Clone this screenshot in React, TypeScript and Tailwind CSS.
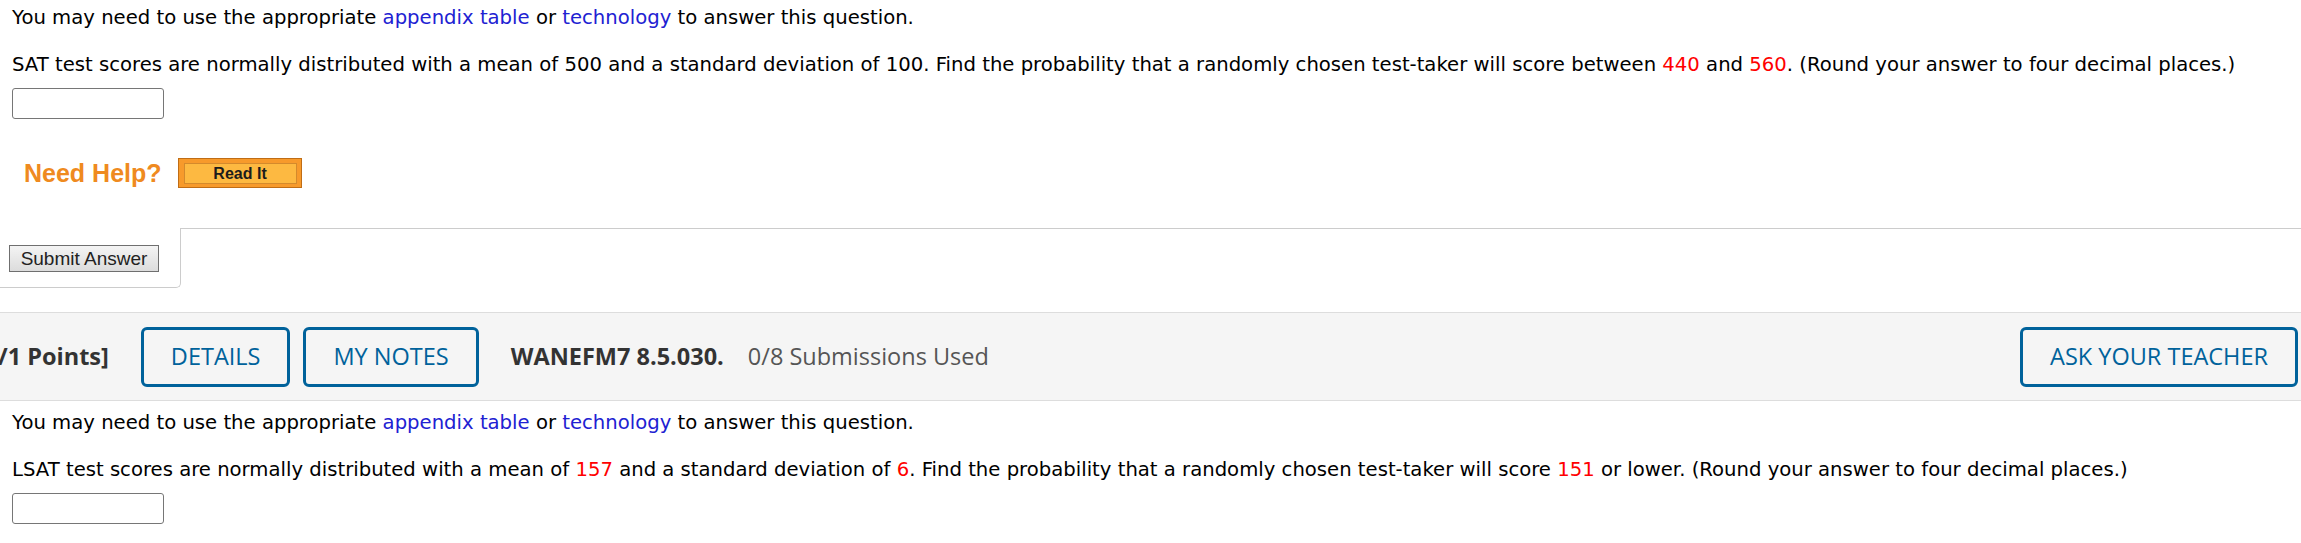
import React from "react";

const Link = ({ children }: { children: React.ReactNode }) => (
  <a className="text-[#2121d2] cursor-pointer">{children}</a>
);

const Red = ({ children }: { children: React.ReactNode }) => <span className="text-[#ff0000]">{children}</span>;

const AnswerBox = () => (
  <input type="text" className="mt-[11px] block w-[152px] h-[31px] border border-[#767676] rounded-[3px] bg-white outline-none" />
);

const OutlineButton = ({ label }: { label: string }) => (
  <button className="h-[60px] px-[27px] border-[3px] border-[#00629b] rounded-[6px] text-[#00629b] text-[23.5px] leading-none">
    {label}
  </button>
);

export default function App() {
  return (
    <div className="w-[2301px] h-[543px] overflow-hidden bg-white text-black">
      <div className="pl-[12px] font-[family-name:'DejaVu_Sans',Verdana,sans-serif] text-[19.65px] leading-[24px]">
        <p className="pt-[6px]">
          You may need to use the appropriate <Link>appendix table</Link> or <Link>technology</Link> to answer this question.
        </p>
        <p className="mt-[23px]">
          SAT test scores are normally distributed with a mean of 500 and a standard deviation of 100. Find the probability that a
          randomly chosen test-taker will score between <Red>440</Red> and <Red>560</Red>. (Round your answer to four decimal places.)
        </p>
        <AnswerBox />
      </div>

      <div className="mt-[39px] pl-[24px] flex items-center gap-[16px] font-[family-name:'Liberation_Sans',Arial,sans-serif]">
        <span className="text-[25px] leading-none font-bold text-[#ef8a20]">Need Help?</span>
        <div className="w-[124px] h-[30px] border border-[#c06d15] bg-[#f79a2b] pt-[4px] pr-[4px] pb-[3px] pl-[5px]">
          <div className="h-full border border-[#d48a2c] bg-[#fdb941] flex items-center justify-center text-[16px] font-bold text-[#1c1c1c]">
            Read It
          </div>
        </div>
      </div>

      <div className="mt-[40px] flex">
        <div className="w-[181px] h-[60px] shrink-0 border-r border-b border-[#cccccc] rounded-br-[5px] pl-[9px] pt-[17px]">
          <button className="h-[27px] w-[150px] border border-[#6f6f6f] bg-gradient-to-b from-[#f4f4f4] to-[#dcdcdc] font-[family-name:'Liberation_Sans',Arial,sans-serif] text-[19px] leading-none text-[#222222]">
            Submit Answer
          </button>
        </div>
        <div className="flex-1 h-[60px] border-t border-[#cccccc]" />
      </div>

      <div className="mt-[24px] h-[89px] bg-[#f5f5f5] border-y border-[#dddddd] flex items-center pr-[3px] font-[family-name:'Open_Sans',sans-serif] overflow-hidden">
        <span className="-ml-[2px] text-[23.5px] font-bold text-[#333333]">/1 Points]</span>
        <div className="ml-[32px] flex gap-[13px]">
          <OutlineButton label="DETAILS" />
          <OutlineButton label="MY NOTES" />
        </div>
        <span className="ml-[32px] text-[23.5px] font-bold text-[#333333]">WANEFM7 8.5.030.</span>
        <span className="ml-[24px] text-[23.5px] text-[#555555]">0/8 Submissions Used</span>
        <div className="ml-auto">
          <OutlineButton label="ASK YOUR TEACHER" />
        </div>
      </div>

      <div className="pl-[12px] pt-[10px] font-[family-name:'DejaVu_Sans',Verdana,sans-serif] text-[19.65px] leading-[24px]">
        <p>
          You may need to use the appropriate <Link>appendix table</Link> or <Link>technology</Link> to answer this question.
        </p>
        <p className="mt-[23px]">
          LSAT test scores are normally distributed with a mean of <Red>157</Red> and a standard deviation of <Red>6</Red>. Find the
          probability that a randomly chosen test-taker will score <Red>151</Red> or lower. (Round your answer to four decimal places.)
        </p>
        <AnswerBox />
      </div>
    </div>
  );
}
